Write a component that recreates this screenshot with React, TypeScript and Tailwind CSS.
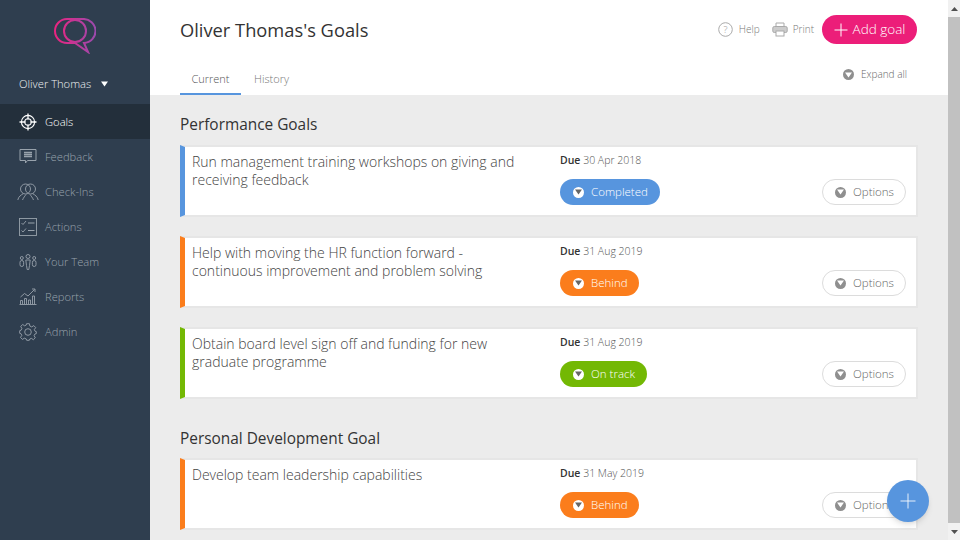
const nav = [
  { label: "Goals", icon: <GoalsIcon />, active: true },
  { label: "Feedback", icon: <FeedbackIcon /> },
  { label: "Check-Ins", icon: <CheckInsIcon /> },
  { label: "Actions", icon: <ActionsIcon /> },
  { label: "Your Team", icon: <TeamIcon /> },
  { label: "Reports", icon: <ReportsIcon /> },
  { label: "Admin", icon: <AdminIcon /> },
];

const performanceGoals = [
  {
    title: "Run management training workshops on giving and receiving feedback",
    due: "30 Apr 2018",
    status: "Completed",
    stripe: "border-l-[#5795de]",
    pill: "bg-[#5795de] w-[100px]",
  },
  {
    title: "Help with moving the HR function forward - continuous improvement and problem solving",
    due: "31 Aug 2019",
    status: "Behind",
    stripe: "border-l-[#fb7d1c]",
    pill: "bg-[#fb7d1c] w-[79px]",
  },
  {
    title: "Obtain board level sign off and funding for new graduate programme",
    due: "31 Aug 2019",
    status: "On track",
    stripe: "border-l-[#73b804]",
    pill: "bg-[#73b804] w-[87px]",
  },
];

function GoalsIcon() {
  return (
    <svg width="18" height="18" viewBox="0 0 18 18" fill="none" stroke="currentColor" strokeWidth="1.1">
      <circle cx="9" cy="9" r="6.6" />
      <circle cx="9" cy="9" r="3.2" />
      <path d="M9 0.5V6.5M9 11.5V17.5M0.5 9H6.5M11.5 9H17.5" strokeWidth="1.3" />
    </svg>
  );
}

function FeedbackIcon() {
  return (
    <svg width="18" height="17" viewBox="0 0 18 17" fill="none" stroke="currentColor">
      <path d="M1 1.5H17V12.5H8.5L6.5 15V12.5H1Z" />
      <path d="M5 4.5H13M5 6.5H13M5 8.5H13" strokeWidth="1.4" />
    </svg>
  );
}

function CheckInsIcon() {
  return (
    <svg width="22" height="18" viewBox="0 0 22 18" fill="none" stroke="currentColor" strokeWidth="0.9">
      <circle cx="8.5" cy="6" r="5" />
      <circle cx="13.5" cy="6" r="5" />
      <path d="M6.5 10.5C4 12 1.5 13.5 0.8 17M15.5 10.5C18 12 20.5 13.5 21.2 17M9 11.5C8 13 6.5 14.5 5.5 17M13 11.5C14 13 15.5 14.5 16.5 17" />
    </svg>
  );
}

function ActionsIcon() {
  return (
    <svg width="18" height="18" viewBox="0 0 18 18" fill="none" stroke="currentColor" strokeWidth="0.9">
      <rect x="0.5" y="0.5" width="17" height="17" />
      <path d="M2.5 5L4 6.5L7 3M2.5 12.5L4 14L7 10.5" />
      <path d="M9 5H15.5M9 12.5H15.5" strokeWidth="1.1" />
    </svg>
  );
}

function TeamIcon() {
  return (
    <svg width="18" height="16" viewBox="0 0 18 16" fill="none" stroke="currentColor" strokeWidth="0.9">
      <circle cx="9" cy="2.5" r="2" />
      <path d="M6.8 6H11.2L10.5 11.5L9.8 15.5H8.2L7.5 11.5Z" />
      <circle cx="2.8" cy="4" r="1.5" />
      <rect x="1" y="6.5" width="3.6" height="6" rx="1.8" />
      <circle cx="15.2" cy="4" r="1.5" />
      <rect x="13.4" y="6.5" width="3.6" height="6" rx="1.8" />
    </svg>
  );
}

function ReportsIcon() {
  return (
    <svg width="18" height="17" viewBox="0 0 18 17" fill="none" stroke="currentColor" strokeWidth="0.9">
      <path d="M0.5 16.5H17.5" />
      <path d="M1.5 16V12.5H3.5V16M5.5 16V10.5H7.5V16M9.5 16V12H11.5V16M13.5 16V8H15.5V16" />
      <path d="M1.5 9L5.5 5.5L9 8L15.5 1.5" />
      <path d="M13 1H16V4" />
    </svg>
  );
}

function AdminIcon() {
  return (
    <svg width="18" height="18" viewBox="0 0 18 18" fill="none" stroke="currentColor" strokeWidth="0.9">
      <circle cx="9" cy="9" r="3.3" />
      <path d="M7.6 0.7H10.4L10.9 3.1L12.7 3.9L14.8 2.6L16.7 4.6L15.3 6.6L16 8.2L17.3 8.6V10.6L15.9 11L15.1 12.7L16.3 14.8L14.4 16.7L12.4 15.4L10.8 16L10.3 17.3H7.7L7.2 15.9L5.4 15.2L3.4 16.4L1.5 14.4L2.8 12.4L2.1 10.8L0.7 10.3V7.7L2.1 7.2L2.9 5.4L1.7 3.4L3.7 1.5L5.6 2.8L7.2 2.1Z" />
    </svg>
  );
}

function Logo() {
  return (
    <svg width="42" height="36" viewBox="0 0 42 36" fill="none" stroke="url(#logoGrad)" strokeWidth="2">
      <defs>
        <linearGradient id="logoGrad" gradientUnits="userSpaceOnUse" x1="1" y1="0" x2="41" y2="0">
          <stop offset="0" stopColor="#ea2480" />
          <stop offset="1" stopColor="#9c4aac" />
        </linearGradient>
      </defs>
      <path d="M13 1H29A12 12 0 0 1 30 25L34 34L21 25H13A12 12 0 0 1 13 1Z" />
      <circle cx="21" cy="13" r="11" />
    </svg>
  );
}

function DownDisc({ className }: { className: string }) {
  return (
    <span className={`flex items-center justify-center rounded-full w-[11px] h-[11px] ${className}`}>
      <svg width="7" height="6" viewBox="0 0 7 6" fill="currentColor">
        <path d="M0 0.5H7L3.5 5.5Z" />
      </svg>
    </span>
  );
}

function OptionsButton() {
  return (
    <div className="flex items-center gap-[7px] w-[84px] h-[26px] pl-[12px] rounded-full border border-[#dcdcdc] bg-white text-[11.5px] font-light text-[#666]">
      <DownDisc className="bg-[#8f8f8f] text-white" />
      Options
    </div>
  );
}

function GoalCard({
  title,
  due,
  status,
  stripe,
  pill,
}: {
  title: string;
  due: string;
  status: string;
  stripe: string;
  pill: string;
}) {
  return (
    <div className={`flex h-[72px] bg-white border-2 border-[#e6e6e6] border-l-[5px] ${stripe}`}>
      <div className="w-[375px] pl-[7px] pr-[33px] pt-[6px] text-[14px] leading-[18px] font-light text-[#444]">
        {title}
      </div>
      <div className="flex flex-col pt-[5px] flex-1">
        <div className="text-[10.5px] leading-[16px] font-light text-[#555]">
          <span className="font-semibold text-[#333]">Due</span> {due}
        </div>
        <div className="flex items-center justify-between pr-[10px] mt-[11px]">
          <div className={`flex items-center gap-[7px] h-[26px] pl-[13px] rounded-full text-[11.5px] font-light text-white ${pill}`}>
            <DownDisc className="bg-white text-[#666]" />
            {status}
          </div>
          <OptionsButton />
        </div>
      </div>
    </div>
  );
}

export default function App() {
  return (
    <div className="relative flex h-[540px] w-[960px] overflow-hidden bg-[#ececec] font-['Open_Sans',sans-serif]">
      <aside className="w-[150px] shrink-0 bg-[#2f3e4f] flex flex-col">
        <div className="flex justify-center pt-[18px] h-[66px]">
          <Logo />
        </div>
        <div className="flex items-center h-[36px] mb-[2px] pl-[19px] gap-[10px] text-[11.2px] font-light text-[#eef0f2]">
          Oliver Thomas
          <svg width="7" height="6" viewBox="0 0 7 6" fill="white">
            <path d="M0 0.5H7L3.5 5.5Z" />
          </svg>
        </div>
        <nav className="flex flex-col">
          {nav.map((item) => (
            <div
              key={item.label}
              className={`flex items-center h-[35px] text-[11.2px] font-light ${
                item.active ? "bg-[#232f3b] text-white" : "text-[#98a2ac]"
              }`}
            >
              <span className="w-[45px] pr-[4px] flex justify-end pl-[18px] shrink-0">
                <span className="flex justify-center w-[22px] shrink-0 mr-[2px]">{item.icon}</span>
              </span>
              <span className="pt-[2px]">{item.label}</span>
            </div>
          ))}
        </nav>
      </aside>

      <main className="flex-1 min-w-0 flex flex-col">
        <header className="h-[95px] shrink-0 bg-white pl-[30px] pr-[31px] flex flex-col">
          <div className="flex items-start justify-between pt-[15px] h-[60px]">
            <h1 className="text-[18.3px] leading-[30px] text-[#333] font-normal">Oliver Thomas's Goals</h1>
            <div className="flex items-center h-[29px] text-[10px] font-light text-[#777]">
              <svg className="mr-[6px]" width="15" height="15" viewBox="0 0 15 15" fill="none" stroke="#aaa">
                <circle cx="7.500" cy="7.500" r="6.800" />
                <text x="7.500" y="11" textAnchor="middle" fontSize="9.500" fill="#999" stroke="none">?</text>
              </svg>
              Help
              <svg className="ml-[12px] mr-[5px]" width="16" height="15" viewBox="0 0 16 15" fill="none" stroke="#aaa">
                <path d="M4 4V1H12V4" />
                <rect x="0.800" y="4.500" width="14.400" height="6" rx="1.500" fill="#ccc" />
                <rect x="4" y="9" width="8" height="5" fill="white" />
              </svg>
              Print
              <div className="ml-[8px] flex items-center justify-center gap-[5px] w-[95px] h-[29px] rounded-full bg-[#ec1e79] text-white text-[13.5px] font-light">
                <svg width="14" height="14" viewBox="0 0 14 14" stroke="white">
                  <path d="M7 0.500V13.500M0.500 7H13.500" />
                </svg>
                Add goal
              </div>
            </div>
          </div>
          <div className="flex items-end justify-between flex-1">
            <div className="flex text-[11px] font-light">
              <div className="w-[61px] h-[35px] flex justify-center items-start pt-[11px] border-b-2 border-[#5795de] text-[#555]">
                Current
              </div>
              <div className="ml-[13px] h-[35px] pt-[11px] text-[#777]">History</div>
            </div>
            <div className="flex items-center gap-[7px] pr-[10px] pb-[13px] text-[10px] font-light text-[#666]">
              <DownDisc className="bg-[#8f8f8f] text-white" />
              Expand all
            </div>
          </div>
        </header>

        <section className="px-[30px]">
          <h2 className="text-[15.4px] leading-[22px] mt-[19px] mb-[9px] text-[#333] font-normal">Performance Goals</h2>
          <div className="flex flex-col gap-[19px]">
            {performanceGoals.map((goal) => (
              <GoalCard key={goal.title} {...goal} />
            ))}
          </div>
          <h2 className="text-[15.4px] leading-[22px] mt-[29px] mb-[8px] text-[#333] font-normal">Personal Development Goal</h2>
          <GoalCard
            title="Develop team leadership capabilities"
            due="31 May 2019"
            status="Behind"
            stripe="border-l-[#fb7d1c]"
            pill="bg-[#fb7d1c] w-[79px]"
          />
        </section>
      </main>

      <div className="w-[12px] shrink-0 bg-[#f1f1f1] flex flex-col">
        <div className="h-[17px] flex items-center justify-center">
          <svg width="7" height="4" viewBox="0 0 7 4" fill="#505050">
            <path d="M3.500 0L7 4H0Z" />
          </svg>
        </div>
        <div className="flex-1 bg-[#c1c1c1]" />
        <div className="h-[17px] flex items-center justify-center">
          <svg width="7" height="4" viewBox="0 0 7 4" fill="#505050">
            <path d="M0 0H7L3.500 4Z" />
          </svg>
        </div>
      </div>

      <div className="absolute left-[887px] top-[480px] w-[42px] h-[42px] rounded-full bg-[#5795de] shadow-md flex items-center justify-center">
        <svg width="16" height="16" viewBox="0 0 16 16" stroke="white" strokeOpacity="0.85">
          <path d="M8 0.500V15.500M0.500 8H15.500" />
        </svg>
      </div>
    </div>
  );
}
